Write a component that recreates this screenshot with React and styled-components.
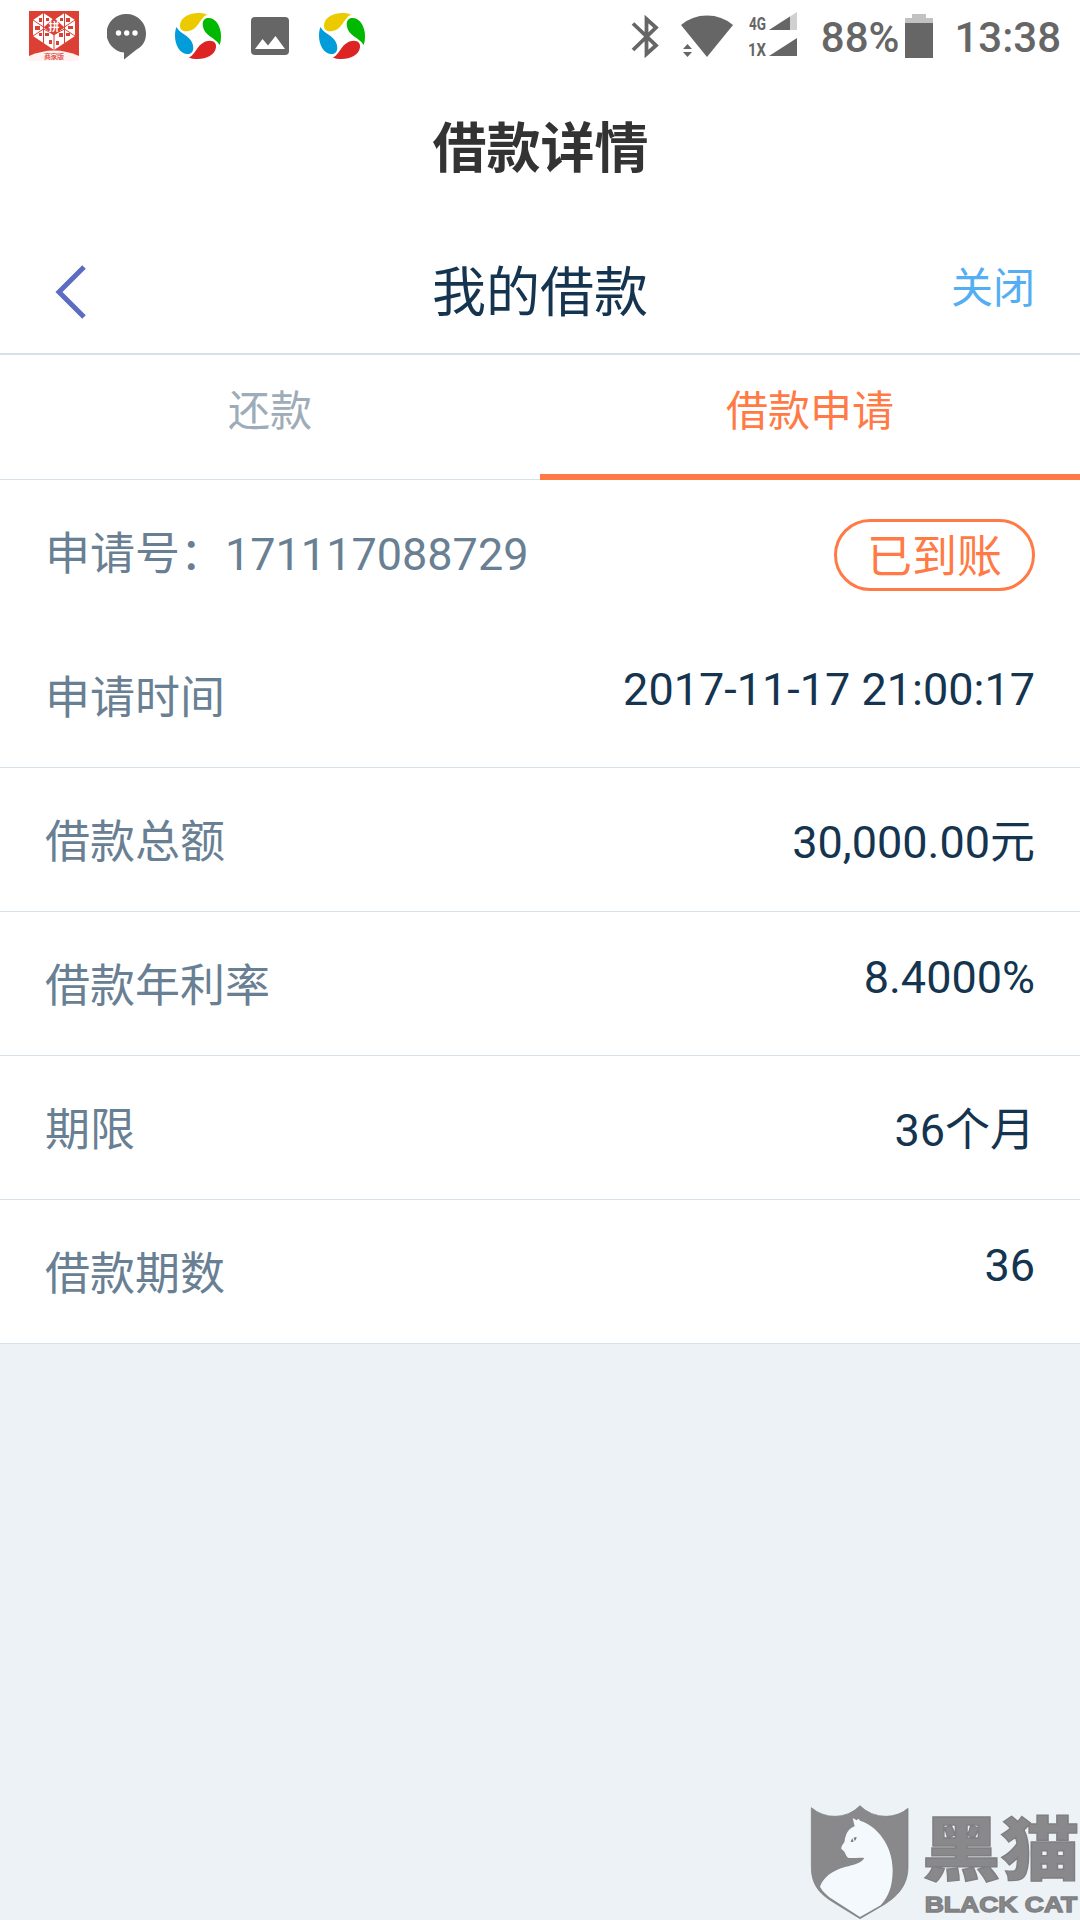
import React from 'react';
import styled, { createGlobalStyle } from 'styled-components';

const GlobalStyle = createGlobalStyle`
    body {
        margin: 0;
        background-color: #ecf2f6;
        font-family: Roboto, "Noto Sans CJK SC", sans-serif;
    }
    * {
        box-sizing: border-box;
    }
`;
const Screen = styled.div`
    position: relative;
    width: 1080px;
    height: 1920px;
    overflow: hidden;
    background-color: #ecf2f6;
`;
const StatusBar = styled.div`
    display: flex;
    justify-content: space-between;
    height: 72px;
    padding: 0 19px 0 29px;
    background-color: #fff;
`;
const StatusGroup = styled.div`
    display: flex;
    align-items: flex-start;
`;
const StatusIcon = styled.svg`
    display: block;
    flex: none;
    margin-left: ${(props) => props.$gap || 0}px;
`;
const StatusText = styled.span`
    margin-left: ${(props) => props.$gap || 0}px;
    font-size: 42px;
    font-weight: 500;
    line-height: 50px;
    padding-top: 13px;
    color: #666;
    white-space: nowrap;
`;
const TitleBar = styled.h1`
    display: flex;
    justify-content: center;
    align-items: center;
    height: 144px;
    margin: 0;
    padding-left: 1px;
    background-color: #fff;
    color: #333;
    font-size: 54px;
    font-weight: 700;
`;
const Header = styled.header`
    display: grid;
    grid-template-columns: 1fr auto 1fr;
    height: 139px;
    padding: 0 45px 0 55px;
    border-bottom: 2px solid #d8e1e8;
    background-color: #fff;
`;
const BackButton = styled.button`
    justify-self: start;
    align-self: start;
    margin: 49px 0 0;
    padding: 0;
    border: 0;
    background: none;
`;
const BackIcon = styled.svg`
    display: block;
`;
const HeaderTitle = styled.h2`
    margin: 33px 0 0 -10px;
    color: #14344f;
    font-size: 54px;
    font-weight: 400;
`;
const CloseLink = styled.a`
    justify-self: end;
    margin-top: 38px;
    color: #54aef3;
    font-size: 42px;
`;
const Tabs = styled.nav`
    display: flex;
    height: 125px;
    background-color: #fff;
`;
const Tab = styled.a`
    flex: 1;
    padding-top: 22px;
    text-align: center;
    font-size: 42px;
    color: ${(props) => (props.$active ? '#ff7a45' : '#9dacb8')};
    border-bottom: ${(props) => (props.$active ? '6px solid #ff7a45' : '1px solid #d6e1e8')};
`;
const List = styled.div`
    background-color: #fff;
`;
const Row = styled.div`
    display: flex;
    justify-content: space-between;
    align-items: flex-start;
    height: 144px;
    padding: 39px 45px 0;
    border-bottom: ${(props) => (props.$plain ? '0' : '1px solid #d6e1e8')};
    font-size: 45px;
`;
const Label = styled.span`
    margin-top: -1px;
    color: #697f93;
`;
const Value = styled.span`
    margin-top: ${(props) => (props.$unit ? -1 : 0)}px;
    color: #14344f;
`;
const Badge = styled.span`
    display: flex;
    justify-content: center;
    align-items: center;
    width: 201px;
    height: 72px;
    padding-bottom: 3px;
    border: 3px solid #ff7a45;
    border-radius: 36px;
    color: #ff7a45;
`;
const Watermark = styled.svg`
    position: absolute;
    right: 0;
    bottom: 0;
`;

const rows = [
    { label: '申请时间', value: '2017-11-17 21:00:17' },
    { label: '借款总额', value: '30,000.00元', unit: true },
    { label: '借款年利率', value: '8.4000%' },
    { label: '期限', value: '36个月', unit: true },
    { label: '借款期数', value: '36' },
];

function ShopIcon() {
    return (
        <StatusIcon width="50" height="61" viewBox="0 -11 50 61">
            <rect width="50" height="50" fill="#dc4034" />
            <path d="M4 9 L14.500 2 L25 9 L35.500 2 L46 9 V25 L25 39 L4 25 Z" fill="#fff" />
            <path d="M14.500 2 V32 M35.500 2 V32 M4 9 L25 23 M46 9 L25 23 M4 25 L14.500 18 L25 23.500 L35.500 18 L46 25 M25 23 V39" stroke="#dc4034" strokeWidth="1" fill="none" />
            <path d="M25 7 L35 16 L25 24.500 L15 16 Z" fill="#dc4034" />
            <path d="M10 7h3v4h-3z M17 7h3v3h-3z M31 7h3v3h-3z M37 7h4v4h-4z M6 15h5v4h-5z M39 15h5v3h-5z M10 22h3v3h-3z M16 22h4v3h-4z M30 22h4v4h-4z M37 22h4v3h-4z M20 29h3v4h-3z M27 30h3v4h-3z" fill="#dc4034" />
            <text x="25" y="20" fontSize="11" fontWeight="700" textAnchor="middle" fill="#fff">拼</text>
            <path d="M0 45 Q25 34 50 45 V50 H0 Z" fill="#fff2f0" />
            <text x="25" y="48" fontSize="7" fontWeight="500" textAnchor="middle" fill="#dc4034" textLength="20">商家版</text>
        </StatusIcon>
    );
}

const petal = 'M-18 -11 C-17.500 -19 -8 -23 0 -23 C4 -23 7 -22.500 9 -21.500 C5 -19.500 3 -15.500 0 -11.500 C-3 -7.500 -7 -4.700 -12 -4.700 C-16 -4.700 -18.500 -7.500 -18 -11 Z';

function BallIcon({ gap }) {
    return (
        <StatusIcon $gap={gap} width="46" height="59" viewBox="-23 -36 46 59">
            <path d={petal} fill="#ebcb00" />
            <path d={petal} fill="#00b800" transform="rotate(90)" />
            <path d={petal} fill="#dc2424" transform="rotate(180)" />
            <path d={petal} fill="#009dda" transform="rotate(270)" />
        </StatusIcon>
    );
}

function BlackCat() {
    return (
        <Watermark width="300" height="140" viewBox="0 0 900 420">
            <path
                d="M94 83 Q125 109 165 109 Q210 108 240 77 Q270 108 318 109 Q357 108 384 85 V260 C384 318 350 350 312 374 L240 416 L160 367 C115 340 94 310 94 262 Z"
                fill="#89898b"
                stroke="#77777a"
                strokeWidth="2"
            />
            <path
                d="M218 114 L230 121 L236 116 L240 122 C290 137 338 195 338 270 C338 320 325 350 302 376 L240 411 L162 361 C142 348 128 335 120 320 C130 292 155 273 195 261 C224 254 244 250 253 234 C235 231 218 236 204 233 C196 227 199 218 184 207 C183 196 191 193 194 183 C197 162 205 146 224 139 Z"
                fill="#f4f9fd"
            />
            <path d="M212 186 Q214 173 230 171 Q228 187 212 186 Z" fill="#77777a" />
            <path d="M219 174 L223 185" stroke="#f4f9fd" strokeWidth="4" />
            <text x="426" y="286" fontSize="208" fontWeight="900" fill="#89898b" stroke="#7f7f82" strokeWidth="4" textLength="472" lengthAdjust="spacingAndGlyphs">黑猫</text>
            <text x="434" y="397" fontFamily="Liberation Sans" fontSize="68" fontWeight="700" fill="#89898b" stroke="#7f7f82" strokeWidth="4" textLength="458" lengthAdjust="spacingAndGlyphs">BLACK CAT</text>
        </Watermark>
    );
}

function App() {
    return (
        <Screen>
            <GlobalStyle />
            <StatusBar>
                <StatusGroup>
                    <ShopIcon />
                    <StatusIcon $gap={28} width="39" height="60" viewBox="107 0 39 60" fill="#666">
                        <path d="M126.500 14 A19.300 19.300 0 0 1 146 33.500 C146 43 141 47 136 50 L124 59.500 V52.500 A19.300 19.300 0 0 1 126.500 14 Z" />
                        <circle cx="118.500" cy="33" r="2.700" fill="#fff" />
                        <circle cx="126.700" cy="33" r="2.700" fill="#fff" />
                        <circle cx="135" cy="33" r="2.700" fill="#fff" />
                    </StatusIcon>
                    <BallIcon gap={29} />
                    <StatusIcon $gap={30} width="38" height="60" viewBox="251 0 38 60" fill="#666">
                        <rect x="251" y="17" width="38" height="38" rx="4" />
                        <path d="M255 49 L262.500 39 L268 45.500 L275.500 36 L285 49 Z" fill="#fff" />
                    </StatusIcon>
                    <BallIcon gap={30} />
                </StatusGroup>
                <StatusGroup>
                    <StatusIcon width="30" height="60" viewBox="630 0 30 60" fill="none" stroke="#666" strokeWidth="3.800">
                        <path d="M632 23.500 L655 45.500 L645.500 54 V19 L655 27.500 L632 50" />
                    </StatusIcon>
                    <StatusIcon $gap={20} width="52" height="60" viewBox="680 0 52 60" fill="#666">
                        <path d="M680 25 Q691 15.500 706 15.500 Q721 15.500 732 25 L706 57 Z" />
                        <path d="M682 49 L686.500 44 L691 49 Z M682 52 H691 L686.500 57 Z" />
                    </StatusIcon>
                    <StatusIcon $gap={16} width="48" height="60" viewBox="748 0 48 60" fill="#666">
                        <text x="748" y="30" fontSize="18" fontWeight="700" textLength="17" lengthAdjust="spacingAndGlyphs">4G</text>
                        <text x="747" y="56" fontSize="18" fontWeight="700" textLength="18" lengthAdjust="spacingAndGlyphs">1X</text>
                        <path d="M768 30 L796 12 V30 Z" fill="#d0d0d0" />
                        <path d="M768 30 L789 16.500 V30 Z" />
                        <path d="M768 56 L796 38 V56 Z" />
                    </StatusIcon>
                    <StatusText $gap={24}>88%</StatusText>
                    <StatusIcon $gap={6} width="28" height="60" viewBox="905 0 28 60">
                        <path d="M912 14 H926 V18 H933 V24 H905 V18 H912 Z" fill="#c2c2c2" />
                        <path d="M905 23 H933 V58 H905 Z" fill="#666" />
                    </StatusIcon>
                    <StatusText $gap={21}>13:38</StatusText>
                </StatusGroup>
            </StatusBar>

            <TitleBar>借款详情</TitleBar>

            <Header>
                <BackButton aria-label="返回">
                    <BackIcon width="32" height="54" viewBox="0 0 32 54" fill="none" stroke="#5c6bc4" strokeWidth="5">
                        <path d="M29 2 L4 27 L29 52" />
                    </BackIcon>
                </BackButton>
                <HeaderTitle>我的借款</HeaderTitle>
                <CloseLink>关闭</CloseLink>
            </Header>

            <Tabs>
                <Tab>还款</Tab>
                <Tab $active>借款申请</Tab>
            </Tabs>

            <List>
                <Row $plain>
                    <Label>申请号：171117088729</Label>
                    <Badge>已到账</Badge>
                </Row>
                {rows.map((row) => (
                    <Row key={row.label}>
                        <Label>{row.label}</Label>
                        <Value $unit={row.unit}>{row.value}</Value>
                    </Row>
                ))}
            </List>

            <BlackCat />
        </Screen>
    );
}
export default App;
